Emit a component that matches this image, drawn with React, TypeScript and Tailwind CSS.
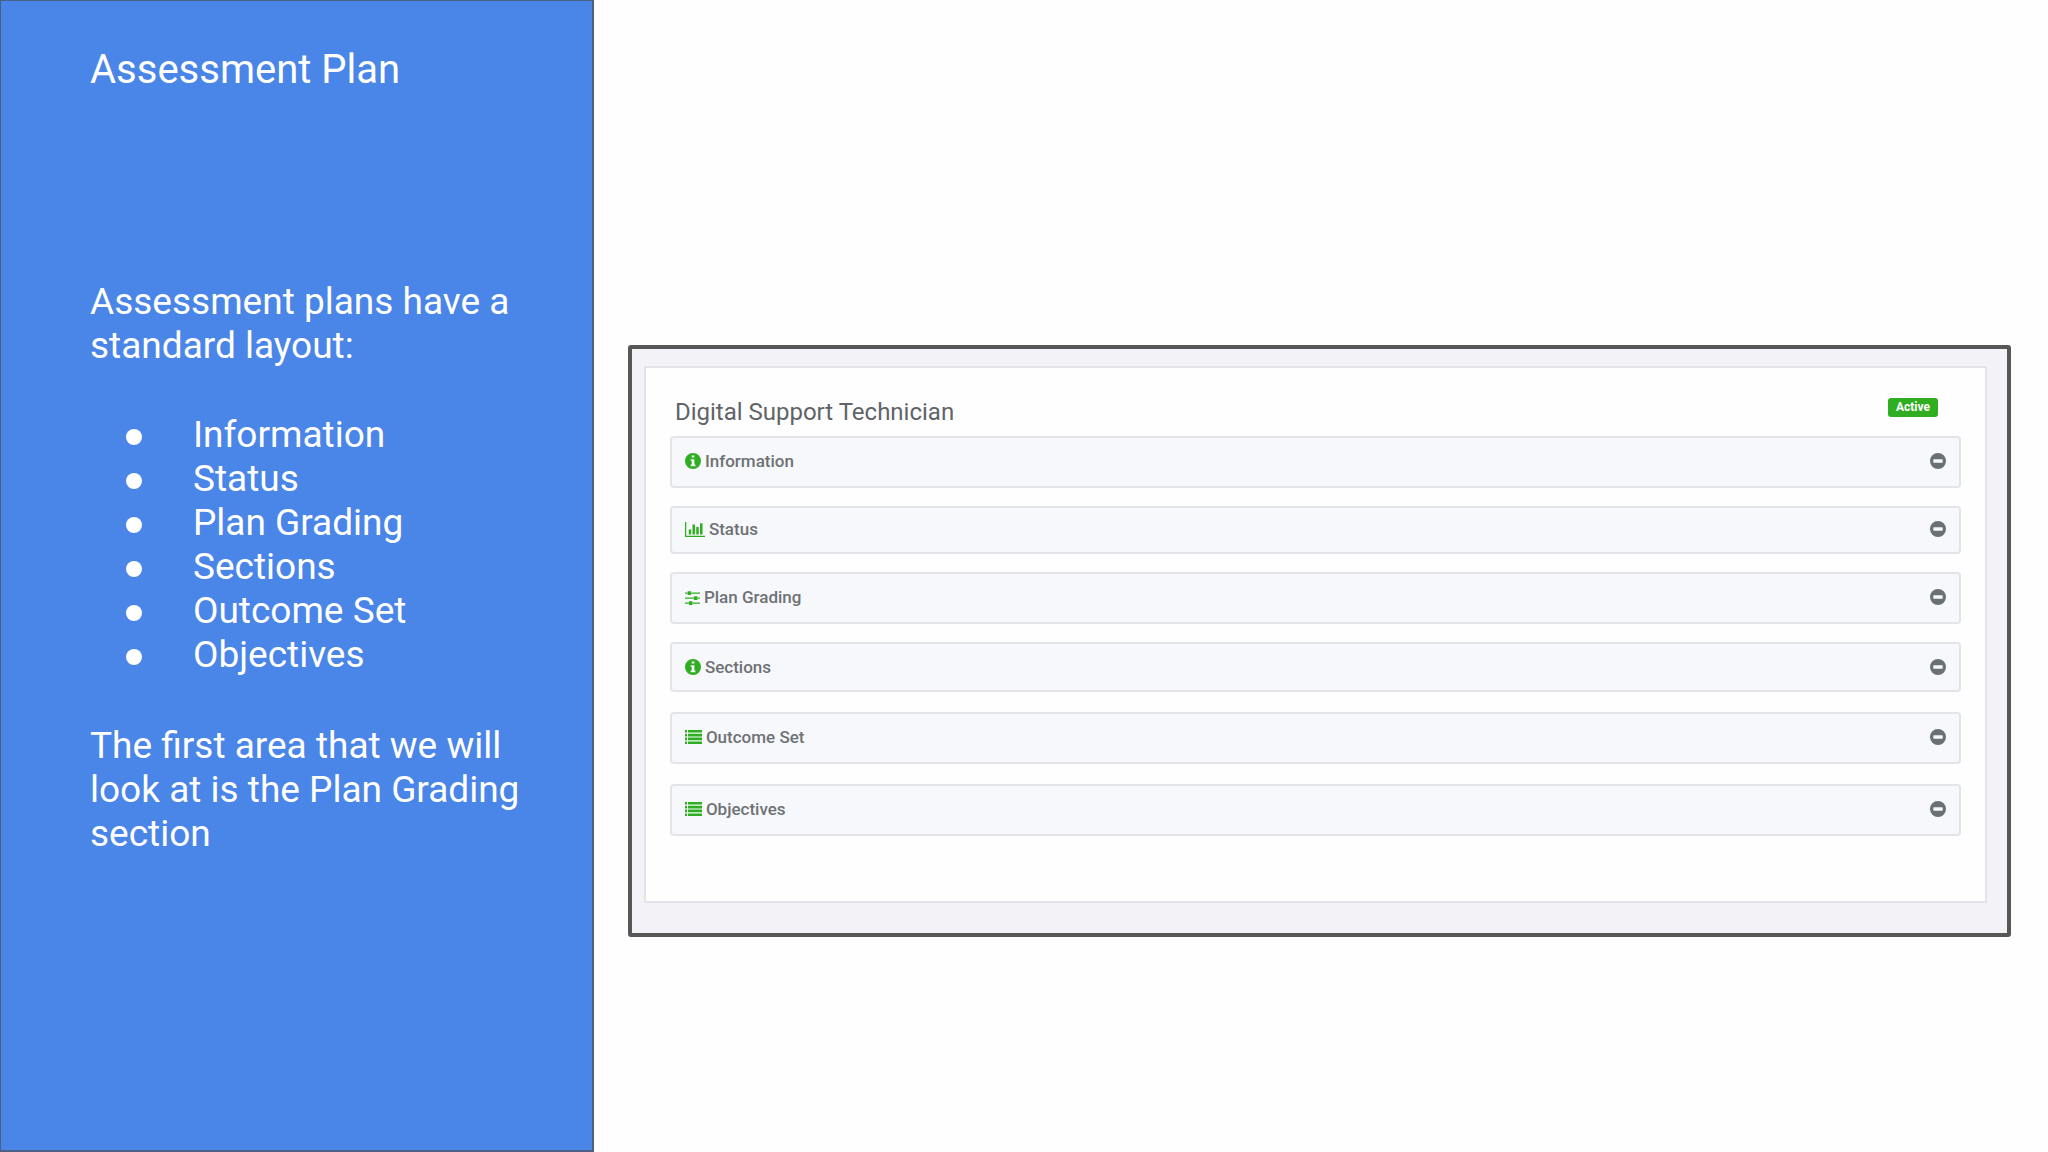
import type { ReactNode } from "react";

const topics = ["Information", "Status", "Plan Grading", "Sections", "Outcome Set", "Objectives"];

function InfoIcon() {
  return (
    <svg viewBox="0 0 16 16" className="h-4 w-4" fill="currentColor" aria-hidden="true">
      <path
        fillRule="evenodd"
        d="M8 0a8 8 0 1 1 0 16A8 8 0 0 1 8 0ZM6.7 2.4v2.2h2.7V2.4H6.7ZM5.7 6.2v1.5h1v3.9h-1v1.6h4.7v-1.6h-1V6.2H5.7Z"
      />
    </svg>
  );
}

function ChartIcon() {
  return (
    <svg viewBox="0 0 2048 1536" className="h-[15px] w-5" fill="currentColor" aria-hidden="true">
      <path d="M640 768v512h-256v-512h256zm384-512v1024h-256v-1024h256zm1024 1152v128h-2048v-1536h128v1408h1920zm-640-896v768h-256v-768h256zm384-384v1152h-256v-1152h256z" />
    </svg>
  );
}

function SlidersIcon() {
  return (
    <svg viewBox="0 128 1536 1536" className="h-[15px] w-[15px]" fill="currentColor" aria-hidden="true">
      <path d="M352 1408v128h-352v-128h352zm352-128q26 0 45 19t19 45v256q0 26-19 45t-45 19h-256q-26 0-45-19t-19-45v-256q0-26 19-45t45-19h256zm160-384v128h-864v-128h864zm-640-512v128h-224v-128h224zm1312 1024v128h-736v-128h736zm-960-1152q26 0 45 19t19 45v256q0 26-19 45t-45 19h-256q-26 0-45-19t-19-45v-256q0-26 19-45t45-19h256zm640 512q26 0 45 19t19 45v256q0 26-19 45t-45 19h-256q-26 0-45-19t-19-45v-256q0-26 19-45t45-19h256zm320 128v128h-224v-128h224zm0-512v128h-864v-128h864z" />
    </svg>
  );
}

function ListIcon() {
  return (
    <svg viewBox="0 0 17 14" className="h-[14px] w-[17px]" fill="currentColor" aria-hidden="true">
      <path d="M0 0h2v2.6H0zM3 0h14v2.6H3zM0 3.8h2v2.6H0zM3 3.8h14v2.6H3zM0 7.6h2v2.6H0zM3 7.6h14v2.6H3zM0 11.4h2V14H0zM3 11.4h14V14H3z" />
    </svg>
  );
}

function MinusIcon() {
  return (
    <svg viewBox="0 0 16 16" className="h-4 w-4" fill="currentColor" aria-hidden="true">
      <path
        fillRule="evenodd"
        d="M8 0a8 8 0 1 1 0 16A8 8 0 0 1 8 0ZM4 6.3a.7.7 0 0 0-.7.7v2a.7.7 0 0 0 .7.7h8a.7.7 0 0 0 .7-.7V7a.7.7 0 0 0-.7-.7H4Z"
      />
    </svg>
  );
}

type Panel = { title: string; icon: ReactNode; spacing: string };

const panels: Panel[] = [
  { title: "Information", icon: <InfoIcon />, spacing: "pt-3 pb-[14px]" },
  { title: "Status", icon: <ChartIcon />, spacing: "mt-[18px] pt-[10px] pb-3" },
  { title: "Plan Grading", icon: <SlidersIcon />, spacing: "mt-[18px] pt-3 pb-[14px]" },
  { title: "Sections", icon: <InfoIcon />, spacing: "mt-[18px] pt-3 pb-3" },
  { title: "Outcome Set", icon: <ListIcon />, spacing: "mt-5 pt-3 pb-[14px]" },
  { title: "Objectives", icon: <ListIcon />, spacing: "mt-5 pt-3 pb-[14px]" },
];

function PanelRow({ title, icon, spacing }: Panel) {
  return (
    <section
      className={`flex items-center justify-between rounded-[4px] border-2 border-[#e2e4e9] bg-[#f7f8fb] px-[13px] ${spacing}`}
    >
      <h3 className="flex items-center gap-1 text-[17px] leading-[22px] font-medium text-[#6e7275]">
        <span className="text-[#2fae21]">{icon}</span>
        {title}
      </h3>
      <button type="button" aria-label={`Collapse ${title}`} className="text-[#697176]">
        <MinusIcon />
      </button>
    </section>
  );
}

export default function App() {
  return (
    <div className="flex min-h-screen bg-[#fefefe] font-[Roboto,sans-serif]">
      <aside className="w-[29%] shrink-0 border-2 border-t border-l border-[#4c5f86] bg-[#4a85e8] pr-10 pl-[89px] text-white">
        <h1 className="pt-[45px] text-[40px] leading-[48px]">Assessment Plan</h1>
        <div className="pt-[186px] text-[37px] leading-[44px]">
          <p>Assessment plans have a standard layout:</p>
          <ul className="pt-[45px] pb-[47px]">
            {topics.map((topic) => (
              <li key={topic} className="flex items-center gap-[51px] pl-9">
                <span className="mt-1 h-4 w-4 rounded-full bg-white" />
                {topic}
              </li>
            ))}
          </ul>
          <p>The first area that we will look at is the Plan Grading section</p>
        </div>
      </aside>

      <main className="flex flex-1 items-start pt-[345px] pr-[37px] pl-[34px]">
        <div className="flex-1 rounded-[3px] border-4 border-[#565858] bg-[#f3f3f7] pt-[17px] pr-5 pb-[30px] pl-3">
          <div className="border-2 border-[#e2e4e9] bg-[#fefefe] px-6 pt-[27px] pb-[65px]">
            <header className="flex items-start justify-between pb-[10px] pl-[5px]">
              <h2 className="pt-[3px] text-[24px] leading-[28px] text-[#606468]">Digital Support Technician</h2>
              <span className="mt-[3px] mr-[23px] rounded-[3px] bg-[#2fae21] px-2 text-[12px] leading-[19px] font-bold text-white">
                Active
              </span>
            </header>
            {panels.map((panel) => (
              <PanelRow key={panel.title} {...panel} />
            ))}
          </div>
        </div>
      </main>
    </div>
  );
}
